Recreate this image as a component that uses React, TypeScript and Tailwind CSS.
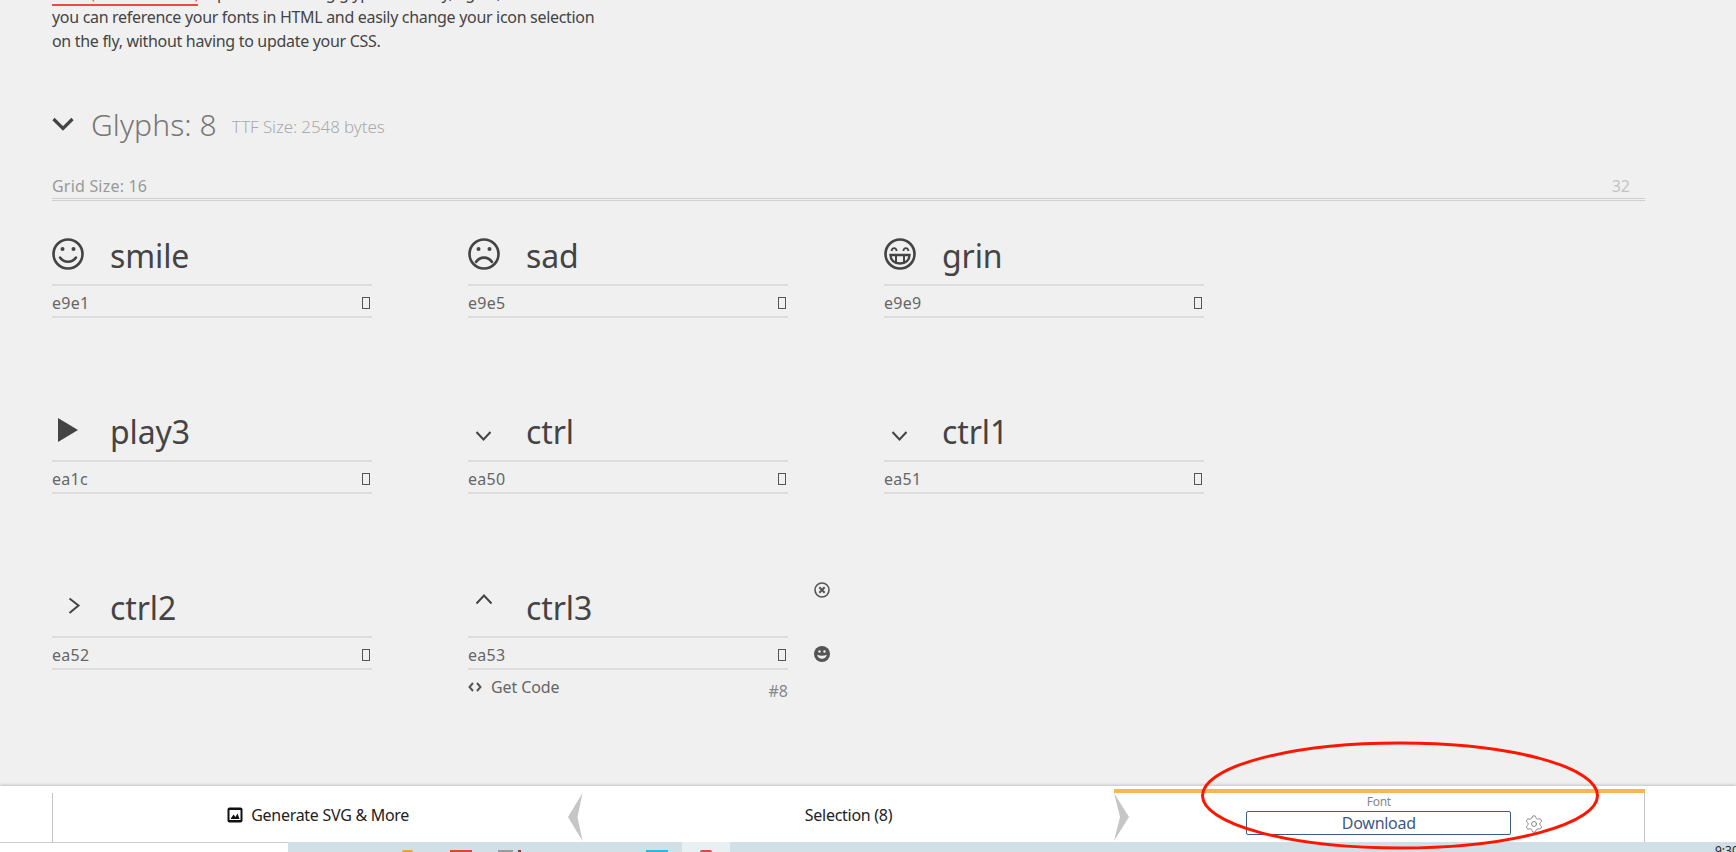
import { Settings } from 'lucide-react';
import type { ReactNode } from 'react';

const ink = '#444444';

function SmileIcon() {
  return (
    <svg viewBox="0 0 32 32" className="h-8 w-8" fill="none" stroke={ink}>
      <circle cx="16" cy="16" r="14.5" strokeWidth="2.6" />
      <circle cx="10.5" cy="11" r="2" fill={ink} stroke="none" />
      <circle cx="21.5" cy="11" r="2" fill={ink} stroke="none" />
      <path d="M8 19.5c2 3 5 4.2 8 4.2s6-1.2 8-4.2" strokeWidth="2.6" strokeLinecap="round" />
    </svg>
  );
}

function SadIcon() {
  return (
    <svg viewBox="0 0 32 32" className="h-8 w-8" fill="none" stroke={ink}>
      <circle cx="16" cy="16" r="14.5" strokeWidth="2.6" />
      <circle cx="10.5" cy="11" r="2" fill={ink} stroke="none" />
      <circle cx="21.5" cy="11" r="2" fill={ink} stroke="none" />
      <path d="M8 24c2-3 5-4.4 8-4.4s6 1.4 8 4.4" strokeWidth="2.6" strokeLinecap="round" />
    </svg>
  );
}

function GrinIcon() {
  return (
    <svg viewBox="0 0 32 32" className="h-8 w-8" fill="none" stroke={ink}>
      <circle cx="16" cy="16" r="14.5" strokeWidth="2.6" />
      <path d="M7.5 13c.6-3.800 4.600-3.800 5.200 0M19.300 13c.6-3.800 4.600-3.800 5.200 0" strokeWidth="1.800" />
      <path d="M6.500 17h19c0 5-3.500 8.500-9.500 8.500S6.500 22 6.500 17z" strokeWidth="2.400" />
      <path d="M12 17v7M20 17v7" strokeWidth="2" />
    </svg>
  );
}

function PlayIcon() {
  return (
    <svg viewBox="0 0 32 32" className="h-8 w-8" fill={ink}>
      <path d="M6 4l20 12L6 28z" />
    </svg>
  );
}

function ChevronGlyph({ d }: { d: string }) {
  return (
    <svg viewBox="0 0 32 32" className="h-8 w-8" fill="none" stroke={ink} strokeWidth="2">
      <path d={d} />
    </svg>
  );
}

const glyphs: { name: string; code: string; icon: ReactNode }[] = [
  { name: 'smile', code: 'e9e1', icon: <SmileIcon /> },
  { name: 'sad', code: 'e9e5', icon: <SadIcon /> },
  { name: 'grin', code: 'e9e9', icon: <GrinIcon /> },
  { name: 'play3', code: 'ea1c', icon: <PlayIcon /> },
  { name: 'ctrl', code: 'ea50', icon: <ChevronGlyph d="M8.500 18l7 7.500 7-7.500" /> },
  { name: 'ctrl1', code: 'ea51', icon: <ChevronGlyph d="M8.500 18l7 7.500 7-7.500" /> },
  { name: 'ctrl2', code: 'ea52', icon: <ChevronGlyph d="M17.500 8.500l9 7-9 7.500" /> },
  { name: 'ctrl3', code: 'ea53', icon: <ChevronGlyph d="M8.500 13.500l7.500-8 7.500 8" /> },
];

function GlyphCard({ name, code, icon, selected }: { name: string; code: string; icon: ReactNode; selected?: boolean }) {
  return (
    <div className="relative h-[176px] w-[320px]">
      <div className="flex h-[52px] items-start border-b-2 border-[#dddddd]">
        <div className="mt-[4px] w-[58px] shrink-0">{icon}</div>
        <span className="text-[32px] leading-[44px] tracking-[-0.1px] text-[#444444]">{name}</span>
      </div>
      <div className="flex h-[32px] items-center justify-between border-b-2 border-[#dddddd] pt-[4px] text-[16px] text-[#666666]">
        <span className="tracking-[0.3px]">{code}</span>
        <span className="mr-[2px] h-[12px] w-[8px] border border-[#555555]" />
      </div>
      {selected && (
        <>
          <div className="flex items-start justify-between text-[#666666]">
            <div className="mt-[7px] flex items-center gap-[9px] text-[16px] leading-[20px]">
              <svg viewBox="0 0 14 10" className="h-[10px] w-[14px]" fill="none" stroke="#555555" strokeWidth="2">
                <path d="M5 1L1.500 5 5 9M9 1l3.500 4L9 9" />
              </svg>
              <span className="tracking-[-0.1px]">Get Code</span>
            </div>
            <span className="mt-[11px] text-[16px] leading-[20px] text-[#888888]">#8</span>
          </div>
          <div className="absolute left-[346px] top-[-4px] flex flex-col gap-[48px]">
            <svg viewBox="0 0 16 16" className="h-4 w-4" fill="none" stroke="#555555" strokeWidth="1.600">
              <circle cx="8" cy="8" r="7" />
              <path d="M5.300 5.300l5.400 5.400M10.700 5.300l-5.400 5.400" strokeWidth="2" />
            </svg>
            <svg viewBox="0 0 16 16" className="h-4 w-4">
              <circle cx="8" cy="8" r="8" fill="#555555" />
              <circle cx="5.500" cy="5.500" r="1.200" fill="#f0f0f0" />
              <circle cx="10.500" cy="5.500" r="1.200" fill="#f0f0f0" />
              <path d="M3.200 8.800c3 1.300 6.600 1.300 9.600 0-.4 2.500-2.400 4-4.800 4s-4.400-1.500-4.800-4z" fill="#f0f0f0" />
            </svg>
          </div>
        </>
      )}
    </div>
  );
}

export default function App() {
  return (
    <div
      className="relative flex h-[852px] flex-col overflow-hidden bg-[#f0f0f0]"
      style={{ fontFamily: '"Noto Sans", sans-serif' }}
    >
      <main className="min-h-0 flex-1 overflow-hidden px-[52px]">
        <div className="-mt-[19px] w-[600px] text-[16px] leading-[24px] tracking-[-0.31px] text-[#444444]">
          <p className="whitespace-nowrap">
            <span className="border-b-2 border-[#f04a3e] tracking-[-1.2px] text-[#f04a3e]">Fonts (Recommended)</span> is preferred. Using glyphs this way, again,
          </p>
          <p>you can reference your fonts in HTML and easily change your icon selection</p>
          <p>on the fly, without having to update your CSS.</p>
        </div>

        <div className="mt-[51px] flex h-[40px] items-center">
          <svg viewBox="0 0 22 14" className="h-[14px] w-[22px]" fill="none" stroke="#444444" strokeWidth="3.200">
            <path d="M1.500 2l9.500 9.500L20.500 2" />
          </svg>
          <span className="ml-[17px] text-[30px] font-light tracking-[0.1px] text-[#777777]">Glyphs: 8</span>
          <span className="ml-[15px] mt-[6px] text-[17px] font-light tracking-[-0.1px] text-[#aaaaaa]">TTF Size: 2548 bytes</span>
        </div>

        <div className="mt-[26px] w-[1593px] border-b-[3px] border-double border-[#cfcfcf]">
          <div className="flex h-[28px] items-center justify-between pt-[3px] text-[16px] leading-[24px]">
            <span className="tracking-[0.2px] text-[#999999]">Grid Size: 16</span>
            <span className="mr-[15px] text-[#c4c4c4]">32</span>
          </div>
        </div>

        <div className="mt-[33px] grid w-[1152px] grid-cols-[repeat(3,320px)] gap-x-[96px]">
          {glyphs.map((g) => (
            <GlyphCard key={g.name} name={g.name} code={g.code} icon={g.icon} selected={g.name === 'ctrl3'} />
          ))}
        </div>
      </main>

      <footer className="relative h-[56px] shrink-0 bg-white px-[52px] pt-[7px] shadow-[0_-1px_3px_rgba(0,0,0,0.2)]">
        <div className="grid h-full w-[1593px] grid-cols-3 border-x border-[#c4c4c4] text-[16px] tracking-[-0.28px] text-[#222222]">
          <div className="relative flex items-center justify-center gap-[8px] pb-[5px]">
            <svg viewBox="0 0 16 16" className="h-4 w-4">
              <rect x="0.500" y="0.500" width="15" height="15" rx="2" fill="#111111" />
              <rect x="2.500" y="3" width="11" height="10" fill="#ffffff" />
              <path d="M3.500 12l3-4.500 2 2.500 2-3.500 2 5.500z" fill="#111111" />
            </svg>
            <span>Generate SVG &amp; More</span>
            <svg viewBox="0 0 15 48" className="absolute right-0 top-0 h-[48px] w-[15px]" fill="#c6c6c6">
              <path d="M14.500 0L0 24l14.500 24L9.500 24z" />
            </svg>
          </div>
          <div className="flex items-center justify-center pb-[5px]">Selection (8)</div>
          <div className="relative flex flex-col items-center">
            <div className="absolute -top-[4px] left-0 h-[4px] w-[531px] bg-[#fdb64e]" />
            <svg viewBox="0 0 15 48" className="absolute left-0 top-0 h-[48px] w-[15px]" fill="#c6c6c6">
              <path d="M0 0l15 24L0 48l6-24z" />
            </svg>
            <span className="text-[12px] leading-[18px] text-[#888888]">Font</span>
            <div className="relative flex h-[24px] w-[265px] items-center justify-center rounded-[2px] border border-[#3d5a80] text-[#3d5a80]">
              Download
              <Settings className="absolute -right-[34px] top-[2px] h-[20px] w-[20px] text-[#888888]" strokeWidth={1.200} />
            </div>
          </div>
        </div>
      </footer>

      <div className="relative flex h-[10px] shrink-0 overflow-hidden bg-[#d0e0e6]">
        <div className="h-full w-[288px] border-t border-[#cccccc] bg-white" />
        <span className="absolute left-[402px] top-[8px] h-[4px] w-[11px] rounded-full bg-[#f0a040]" />
        <span className="absolute left-[450px] top-[8px] h-[4px] w-[22px] bg-[#d9472b]" />
        <span className="absolute left-[498px] top-[8px] h-[4px] w-[15px] bg-[#9a9a9a]" />
        <span className="absolute left-[518px] top-[8px] h-[4px] w-[3px] bg-[#a03030]" />
        <span className="absolute left-[646px] top-[8px] h-[4px] w-[22px] bg-[#28b8e8]" />
        <span className="absolute left-[682px] top-0 h-full w-[48px] bg-[#e8f0f2]" />
        <span className="absolute left-[700px] top-[8px] h-[4px] w-[12px] rounded-full bg-[#d94a3a]" />
        <span className="absolute left-[1715px] top-[2px] text-[12px] leading-[14px] text-[#222222]">9:30</span>
      </div>

      <svg className="pointer-events-none absolute left-[1200px] top-[740px] h-[112px] w-[400px]" viewBox="0 0 400 112" fill="none">
        <ellipse cx="200" cy="55.500" rx="197.500" ry="52.500" stroke="#ff1500" strokeWidth="3" />
      </svg>
    </div>
  );
}
